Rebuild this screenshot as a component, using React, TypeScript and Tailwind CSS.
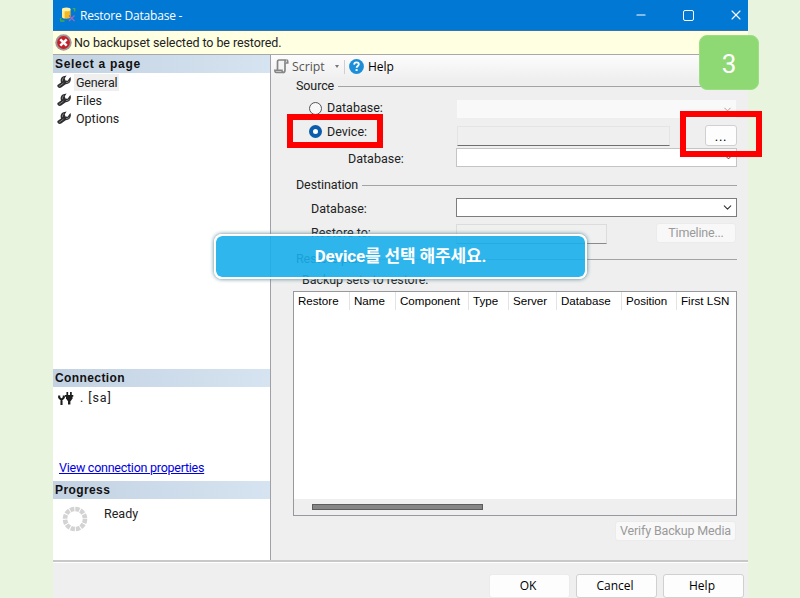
import React from 'react';
import clsx from 'clsx';
import { ChevronDown, Minus, X } from 'lucide-react';

const pages = ['General', 'Files', 'Options'];

const columns = [
  { name: 'Restore', width: 'w-[56px]' },
  { name: 'Name', width: 'w-[46px]' },
  { name: 'Component', width: 'w-[73px]' },
  { name: 'Type', width: 'w-[40px]' },
  { name: 'Server', width: 'w-[48px]' },
  { name: 'Database', width: 'w-[65px]' },
  { name: 'Position', width: 'w-[55px]' },
  { name: 'First LSN', width: 'w-[59px]' },
];

const DatabaseIcon: React.FC = () => (
  <svg width="16" height="16" viewBox="0 0 16 16" fill="none">
    <path d="M2 2.500v7.300c0 1.200 1.800 2 4.300 2s4.300-.8 4.300-2V2.500" fill="#f2b824" />
    <path d="M2 2.500v7.300c0 .9 1 1.500 2.600 1.800V4z" fill="#ffe98a" />
    <ellipse cx="6.300" cy="2.400" rx="4.300" ry="1.900" fill="#fff2a8" />
    <path d="M12.700 1.700h2v2.800M.8 11v3h3.700" stroke="#3fae4a" strokeWidth="1.300" />
    <path d="M9 8.500l5.500 5.500M14.500 8.500L9 14" stroke="#a06cc0" strokeWidth="1.100" />
  </svg>
);

const ErrorIcon: React.FC = () => (
  <svg width="17" height="17" viewBox="0 0 17 17">
    <circle cx="8.500" cy="8.500" r="8.200" fill="#9f9999" />
    <circle cx="8.500" cy="8.500" r="6.400" fill="#c5202a" />
    <path d="M5.300 5.300l6.400 6.400M11.700 5.300l-6.400 6.400" stroke="#fff" strokeWidth="2.500" />
  </svg>
);

const WrenchIcon: React.FC = () => (
  <svg width="15" height="14" viewBox="0 0 15 14">
    <path
      d="M.5 10L4 7.500C3 4.600 4 2 6.500 1.200L9.600.5 7.800 3.300l.6 2.200 2.300.3 1.600-2.600L13.600 2l.3 2.600c-.3 3-2.500 4.700-5.200 4.600l-4.500 3.300C2.200 13.700-.5 12 .5 10z"
      fill="#2e2e2e"
    />
    <path d="M2 11.400L6.500 8M5.400 6.200c-.2-1.800.4-3 1.600-3.700M9 7.500c1.500.2 2.700-.4 3.400-1.600" stroke="#858585" strokeWidth=".9" fill="none" />
  </svg>
);

const ScriptIcon: React.FC = () => (
  <svg width="16" height="15" viewBox="0 0 16 15" fill="none" stroke="#858585">
    <path d="M3.500 11V3c0-1.200.4-2 1.500-2h7.500c-1 0-1.500.8-1.500 2v8c0 1.600-.7 2.500-2 2.500" fill="#f4f4f4" strokeWidth="1.700" />
    <path d="M11.300 4h2.500V2.300c0-.8-.4-1.300-1.200-1.300M.8 11.300h7.200c0 1.400.5 2.200 1.500 2.200H2.300C1.300 13.500.8 12.500.8 11.300z" fill="#d8d8d8" strokeWidth="1.500" />
  </svg>
);

const HelpIcon: React.FC = () => (
  <svg width="15" height="15" viewBox="0 0 15 15" fill="none">
    <circle cx="7.500" cy="7.500" r="7.400" fill="#1c8ed8" />
    <path d="M5.100 5.600c.1-1.400 1-2.200 2.500-2.200 1.300 0 2.200.8 2.200 1.900 0 1.600-2.200 1.700-2.200 3.500" stroke="#fff" strokeWidth="1.800" />
    <rect x="6.600" y="10.100" width="2" height="1.900" fill="#fff" />
  </svg>
);

const PlugIcon: React.FC = () => (
  <svg width="16" height="13" viewBox="0 0 16 13" fill="none" stroke="#1c1c1c">
    <path d="M1.200 3.500v2L3.500 8l2.300-2.500v-2M3.500 7v6" strokeWidth="2.100" />
    <path d="M9.300 0v4M12.900 0v4M7 3.800h8.300" strokeWidth="1.700" />
    <path d="M8 4h6.500v2.500L12.700 9H9.800L8 6.500z" fill="#1c1c1c" stroke="none" />
    <path d="M11.200 8v4.500" strokeWidth="2.400" />
  </svg>
);

const Spinner: React.FC = () => (
  <svg width="26" height="26" viewBox="0 0 26 26" fill="none">
    <circle cx="13" cy="13" r="10" stroke="#d3d3d3" strokeWidth="4.600" strokeDasharray="4.236 1" />
  </svg>
);

const SidebarHeading: React.FC<{ title: string; className?: string }> = ({ title, className }) => (
  <div
    className={clsx(
      "h-[18px] shrink-0 bg-gradient-to-r from-[#c3d2e2] to-[#d6e4f1] pl-[2px] font-['Liberation_Sans',sans-serif] text-[12px] leading-[19px] font-bold text-[#111]",
      className ?? 'tracking-[0.400px]',
    )}
  >
    {title}
  </div>
);

const GroupTitle: React.FC<{ title: string }> = ({ title }) => (
  <div className="flex h-4 items-center gap-[4px] pl-[25px] pr-[11px]">
    <span className="tracking-[-0.100px]">{title}</span>
    <span className="h-px flex-1 bg-[#a3a3a3]" />
  </div>
);

const Button: React.FC<{ label: string; className: string; disabled?: boolean }> = ({ label, className, disabled }) => (
  <button
    className={clsx(
      'flex items-center justify-center rounded-[3px] border whitespace-nowrap',
      disabled ? 'border-[#ebebeb] bg-[#f8f8f8] text-[#9a9a9a]' : 'border-[#d0d0d0] bg-[#fdfdfd] text-black',
      className,
    )}
  >
    {label}
  </button>
);

const Sidebar: React.FC = () => (
  <div className="flex w-[218px] shrink-0 flex-col border-r border-[#a0a0a8] bg-white">
    <SidebarHeading title="Select a page" className="tracking-[0.700px]" />
    <div className="h-[296px]">
      {pages.map((page, i) => (
        <div key={page} className="flex h-[18px] items-center gap-[6px] pl-[4px]">
          <WrenchIcon />
          <span className={clsx('-ml-[4px] px-[2px] leading-[17px]', i === 0 && 'bg-[#efefef] tracking-[-0.150px]')}>{page}</span>
        </div>
      ))}
    </div>
    <SidebarHeading title="Connection" />
    <div className="flex h-[94px] flex-col justify-between pt-[2px] pb-[5px]">
      <div className="flex items-center gap-[6px] pl-[5px] leading-[18px]">
        <PlugIcon />
        <span className="tracking-[0.900px]">. [sa]</span>
      </div>
      <a className="pl-[6px] leading-4 tracking-[-0.250px] text-[#0000e0] underline">View connection properties</a>
    </div>
    <SidebarHeading title="Progress" />
    <div className="flex gap-4 pt-[7px] pl-[9px]">
      <Spinner />
      <span className="leading-[15px]">Ready</span>
    </div>
  </div>
);

const BackupTable: React.FC = () => (
  <div className="ml-[22px] flex h-[225px] w-[444px] flex-col border border-[#98989f] bg-white">
    <div className="flex h-[18px] font-['Liberation_Sans',sans-serif] text-[11.600px] text-black">
      {columns.map((column, i) => (
        <div
          key={column.name}
          className={clsx('shrink-0 pl-1 leading-[17px] whitespace-nowrap', i < columns.length - 1 && 'border-r border-[#e3e3e3]', column.width)}
        >
          {column.name}
        </div>
      ))}
    </div>
    <div className="flex-1" />
    <div className="h-4 bg-[#efefef] pt-[5px] pl-[18px]">
      <div className="h-[6px] w-[171px] border border-[#5c5c5c] bg-[#858585]" />
    </div>
  </div>
);

const RestorePage: React.FC = () => (
  <div className="w-[477px]">
    <div className="flex h-[23px] items-center bg-gradient-to-b from-[#fcfcfc] to-[#f0f0f0] pl-[3px] font-['Open_Sans',sans-serif] text-[12px]">
      <ScriptIcon />
      <span className="ml-[2px] w-[33px] pt-px text-[12.300px] text-[#555]">Script</span>
      <span className="ml-[10px] h-0 w-0 border-x-[2.500px] border-t-[3px] border-x-transparent border-t-[#777]" />
      <span className="ml-[5px] h-[14px] w-px bg-[#cfcfcf]" />
      <span className="ml-[4px]"><HelpIcon /></span>
      <span className="ml-[4px] pt-px text-black">Help</span>
    </div>

    <GroupTitle title="Source" />
    <div className="flex h-[28px] items-center pl-[38px] pr-[12px]">
      <span className="h-[13px] w-[13px] rounded-full border border-[#555] bg-[#f8f8f8]" />
      <span className="mt-px ml-[5px] w-[130px]">Database:</span>
      <span className="mt-[2px] flex h-[18px] flex-1 items-center justify-end bg-[#f9f9f9] pr-[3px]">
        <ChevronDown size={11} strokeWidth={2} className="text-[#999]" />
      </span>
    </div>
    <div className="flex h-[26px] items-center pl-[38px] pr-[11px]">
      <span className="mb-[7px] h-[13px] w-[13px] rounded-full border-[4px] border-[#0b5cad] bg-white" />
      <span className="mb-[6px] ml-[5px] w-[130px]">Device:</span>
      <span className="mt-[2px] h-[20px] w-[213px] border border-[#e4e4e4] border-b-[#6f6f6f] bg-[#efefef]" />
      <Button label="..." className="ml-auto h-[21px] w-[32px] pt-[4px] text-[13px] tracking-[0.800px]" />
    </div>
    <div className="flex h-[19px] items-center pl-[77px] pr-[11px]">
      <span className="mt-[3px] w-[108px]">Database:</span>
      <span className="flex h-[19px] flex-1 items-center justify-end border border-[#c4c4c4] bg-white pr-[2px]">
        <ChevronDown size={11} strokeWidth={2} className="text-[#333]" />
      </span>
    </div>

    <div className="pt-[10px]">
      <GroupTitle title="Destination" />
    </div>
    <div className="mt-[5px] flex h-[19px] items-center pl-[40px] pr-[11px]">
      <span className="mt-[3px] w-[145px]">Database:</span>
      <span className="flex h-[19px] flex-1 items-center justify-end border border-[#7d7d7d] bg-white pr-[2px]">
        <ChevronDown size={13} strokeWidth={2} className="text-[#333]" />
      </span>
    </div>
    <div className="mt-[5px] flex h-[22px] items-center pl-[40px] pr-[12px]">
      <span className="w-[145px] leading-4">Restore to:</span>
      <span className="mt-px h-[20px] w-[151px] border border-[#dcdcdc] border-b-[#8a8a8a] bg-[#f0f0f0]" />
      <Button label="Timeline..." disabled className="ml-auto h-[20px] w-[80px] tracking-[-0.200px]" />
    </div>

    <div className="pt-[7px]">
      <GroupTitle title="Restore plan" />
    </div>
    <div className="h-[24px] pt-[5px] pl-[31px] leading-4 tracking-[-0.050px]">Backup sets to restore:</div>
    <BackupTable />
    <div className="flex justify-end pt-[5px] pr-[12px]">
      <Button label="Verify Backup Media" disabled className="h-[20px] w-[121px] tracking-[-0.150px]" />
    </div>
  </div>
);

const App: React.FC = () => (
  <div className="relative h-[598px] w-[800px] overflow-hidden bg-[#e8f4dd] pl-[53px] font-['Roboto','Noto_Sans_CJK_KR',sans-serif] text-[12.500px] text-[#222]">
    <div className="flex h-full w-[695px] flex-col bg-[#efefef]">
      <div className="flex h-[31px] shrink-0 items-center border-b border-[#3975a9] bg-[#0078d4] pl-[7px] text-white">
        <DatabaseIcon />
        <span className="ml-[4px] flex-1 pt-px font-['Open_Sans',sans-serif] text-[12px] tracking-[-0.200px]">Restore Database -</span>
        <Minus size={14} strokeWidth={1.800} />
        <span className="ml-[35px] h-[11px] w-[11px] rounded-[2px] border border-white" />
        <X size={16} strokeWidth={1.600} className="mr-[4px] ml-[34px]" />
      </div>
      <div className="flex h-[24px] shrink-0 items-center gap-[2px] border-b border-[#a8a8a8] bg-[#ffffe1] pl-[2px]">
        <ErrorIcon />
        <span className="pt-[2px] tracking-[-0.080px]">No backupset selected to be restored.</span>
      </div>
      <div className="flex h-[505px] shrink-0">
        <Sidebar />
        <RestorePage />
      </div>
      <div className="flex h-[38px] justify-end gap-[6px] border-t-2 border-[#c8c8c8] pt-[12px] pr-[4px] font-['Open_Sans',sans-serif] text-[12px] shadow-[inset_0_1px_0_#fff]">
        <Button label="OK" className="h-[24px] w-[81px] border-[#ebebeb] pr-[3px]" />
        <Button label="Cancel" className="h-[24px] w-[81px] pr-[3px]" />
        <Button label="Help" className="h-[24px] w-[81px] pr-[3px]" />
      </div>
    </div>

    {/* Step annotations */}
    <div className="absolute top-[114px] left-[287px] h-[34px] w-[96px] border-[6px] border-[#fe0000]" />
    <div className="absolute top-[111px] left-[680px] h-[46px] w-[82px] border-[6px] border-[#fe0000]" />
    <div className="absolute top-[35px] left-[699px] flex h-[55px] w-[60px] items-center justify-center rounded-[8px] border border-[#9bdf82] bg-[#8fd974] pt-[3px] text-[26px] text-white">
      3
    </div>
    <div className="absolute top-[234px] left-[214px] flex h-[45px] w-[373px] items-center justify-center rounded-[8px] border-2 border-white bg-[#18aeea]/90 bg-clip-padding pt-px text-[17px] font-bold tracking-[-0.150px] whitespace-nowrap text-white shadow-[0_0_4px_#51808f]">
      Device를 선택 해주세요.
    </div>
  </div>
);

export default App;
